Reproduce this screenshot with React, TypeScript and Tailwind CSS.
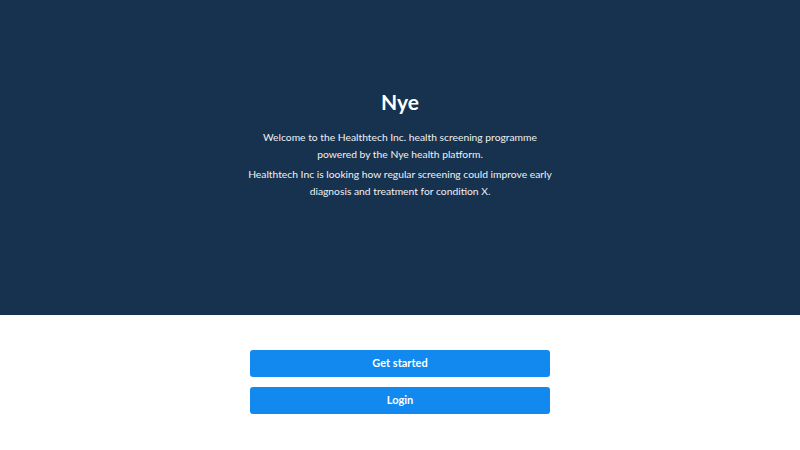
export default function App() {
  return (
    <div className="flex h-[450px] w-[800px] flex-col bg-white font-['Lato','Noto_Sans',sans-serif]">
      <section className="flex h-[315px] flex-col items-center bg-[#17324f] pt-[90px] text-center text-white">
        <h1 className="text-[21px] font-bold leading-[24px]">Nye</h1>
        <p className="mt-[15px] w-[310px] text-[10.3px] leading-[17px] text-[#eef1f5]">
          Welcome to the Healthtech Inc. health screening programme powered by the Nye health platform.
        </p>
        <p className="mt-[3px] w-[310px] text-[10.3px] leading-[17px] text-[#eef1f5]">
          Healthtech Inc is looking how regular screening could improve early diagnosis and treatment for condition X.
        </p>
      </section>
      <div className="flex flex-col items-center gap-[10px] pt-[35px]">
        <button className="h-[27px] w-[300px] rounded-[3px] bg-[#1189ee] text-[11px] font-bold text-white">
          Get started
        </button>
        <button className="h-[27px] w-[300px] rounded-[3px] bg-[#1189ee] text-[11px] font-bold text-white">
          Login
        </button>
      </div>
    </div>
  );
}
